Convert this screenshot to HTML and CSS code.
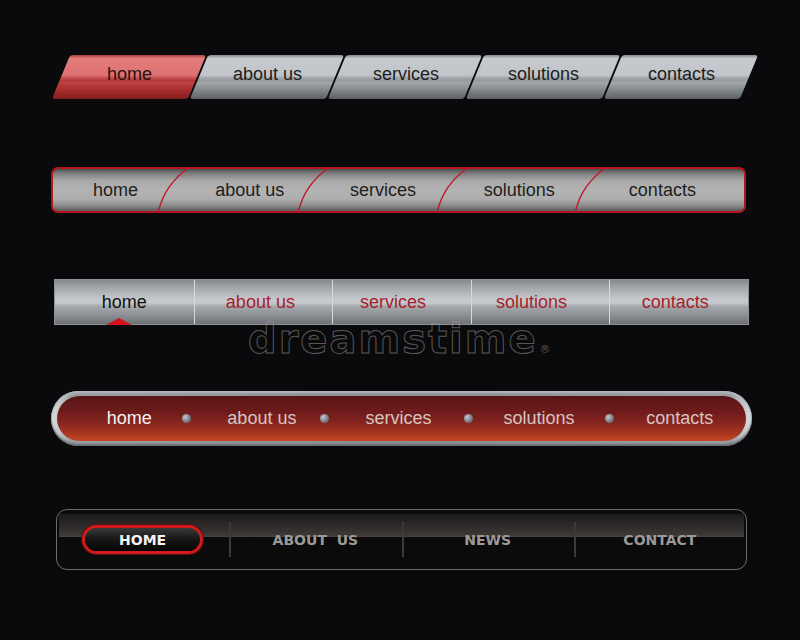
FILE: index.html
```html
<!DOCTYPE html>
<html>
<head>
	<meta charset="utf-8">
	<title>Navigation bars</title>
	<link rel="stylesheet" href="styles.css">
</head>
<body>
	<div class="page">

		<nav class="nav-slant">
			<a class="tab tab-active" href="#"><span>home</span></a>
			<a class="tab" href="#"><span>about us</span></a>
			<a class="tab" href="#"><span>services</span></a>
			<a class="tab" href="#"><span>solutions</span></a>
			<a class="tab" href="#"><span>contacts</span></a>
		</nav>

		<nav class="nav-curve">
			<svg class="curve-lines" width="695" height="46" viewBox="0 0 695 46">
				<path d="M107 46 C111 28 121 12 139 0" />
				<path d="M247 46 C251 28 261 12 279 0" />
				<path d="M386 46 C390 28 400 12 418 0" />
				<path d="M524 46 C528 28 538 12 556 0" />
			</svg>
			<a class="curve-item" href="#">home</a>
			<a class="curve-item" href="#">about us</a>
			<a class="curve-item" href="#">services</a>
			<a class="curve-item" href="#">solutions</a>
			<a class="curve-item" href="#">contacts</a>
		</nav>

		<div class="steel-wrap">
			<nav class="nav-steel">
				<a class="steel-item steel-active" href="#">home</a>
				<a class="steel-item" href="#">about us</a>
				<a class="steel-item" href="#">services</a>
				<a class="steel-item" href="#">solutions</a>
				<a class="steel-item" href="#">contacts</a>
			</nav>
			<div class="watermark">dreamstime<span class="reg">®</span></div>
		</div>

		<nav class="nav-pill">
			<div class="pill-inner">
				<a class="pill-item pill-active" href="#">home</a>
				<a class="pill-item" href="#">about us</a>
				<a class="pill-item" href="#">services</a>
				<a class="pill-item" href="#">solutions</a>
				<a class="pill-item pill-last" href="#">contacts</a>
			</div>
		</nav>

		<nav class="nav-dark">
			<div class="dark-cell"><a class="dark-button" href="#">HOME</a></div>
			<div class="dark-cell dark-sep"><a href="#">ABOUT&nbsp; US</a></div>
			<div class="dark-cell dark-sep"><a href="#">NEWS</a></div>
			<div class="dark-cell dark-sep"><a href="#">CONTACT</a></div>
		</nav>

	</div>
</body>
</html>
```

FILE: styles.css
```css
html, body {
	margin: 0;
	padding: 0;
	background: #0a0a0c;
}
a {
	text-decoration: none;
}
.page {
	width: 800px;
	height: 640px;
	padding-top: 55px;
	box-sizing: border-box;
	font-family: "Liberation Sans", Arial, sans-serif;
	font-size: 18px;
	overflow: hidden;
}

/* 1 - slanted tabs */
.nav-slant {
	display: flex;
	gap: 2px;
	margin-left: 61px;
	height: 44px;
}
.tab {
	width: 136px;
	height: 44px;
	transform: skewX(-22.5deg);
	border-radius: 3px;
	display: flex;
	align-items: center;
	justify-content: center;
	padding-bottom: 6px;
	box-sizing: border-box;
	color: #1c1c1c;
	background: linear-gradient(#868a8f 0, #c6cacf 8%, #c1c5ca 46%, #a4a8ad 52%, #959a9f 58%, #a2a6ab 63%, #7e8388 82%, #5c6065 100%);
}
.tab span {
	transform: skewX(22.5deg);
}
.tab-active {
	color: #2a1010;
	background: linear-gradient(#a84040 0, #e47c7c 8%, #de7272 46%, #c45050 52%, #b43a3a 58%, #be4444 63%, #a42a2a 82%, #841c1c 100%);
}

/* 2 - rounded bar with curved dividers */
.nav-curve {
	position: relative;
	display: grid;
	grid-template-columns: repeat(5, 1fr);
	margin: 68px 0 0 51px;
	width: 695px;
	height: 46px;
	box-sizing: border-box;
	border: 2px solid #b3141f;
	border-radius: 7px;
	background: linear-gradient(#4e4e4e 0, #7c7c7c 10%, #a9a9a9 28%, #b3b3b3 50%, #adadad 72%, #8a8a8a 88%, #5a5a5a 100%);
}
.curve-lines {
	position: absolute;
	left: -2px;
	top: -2px;
}
.curve-lines path {
	fill: none;
	stroke: #c0172a;
	stroke-width: 1.4;
}
.curve-item {
	display: flex;
	align-items: center;
	justify-content: center;
	padding-right: 13px;
	color: #1e1e1e;
}
.curve-item:nth-child(3) { padding-right: 21px; }
.curve-item:nth-child(4) { padding-right: 31px; }
.curve-item:nth-child(5) { padding-right: 35px; }
.curve-item:nth-child(6) { padding-right: 25px; }

/* 3 - steel bar */
.steel-wrap {
	position: relative;
	margin: 66px 0 0 54px;
	width: 695px;
}
.nav-steel {
	display: grid;
	grid-template-columns: repeat(5, 1fr);
	height: 46px;
	box-sizing: border-box;
	border: 1px solid #8e9195;
	background: linear-gradient(#85888c 0, #a3a6aa 18%, #c3c6ca 42%, #c6c9cd 52%, #a4a7ab 60%, #8f9296 78%, #6d7074 100%);
}
.steel-item {
	position: relative;
	display: flex;
	align-items: center;
	justify-content: center;
	color: #a51f2b;
	border-left: 1px solid #d6d8db;
}
.steel-item:first-child {
	border-left: none;
}
.steel-item:nth-child(2) { padding-right: 6px; }
.steel-item:nth-child(3) { padding-right: 18px; }
.steel-item:nth-child(4) { padding-right: 18px; }
.steel-item:nth-child(5) { padding-right: 8px; }
.steel-active {
	color: #111;
}
.steel-active::after {
	content: "";
	position: absolute;
	left: 51px;
	bottom: -1px;
	border-left: 13px solid transparent;
	border-right: 13px solid transparent;
	border-bottom: 7px solid #d3121e;
}
.watermark {
	position: absolute;
	left: 194px;
	top: 47px;
	line-height: 26px;
	font-family: "DejaVu Sans", sans-serif;
	font-weight: bold;
	font-size: 40px;
	letter-spacing: 2px;
	color: transparent;
	-webkit-text-stroke: 1px rgba(165, 165, 165, 0.5);
	pointer-events: none;
}
.watermark .reg {
	font-size: 11px;
	font-weight: normal;
	letter-spacing: 0;
	-webkit-text-stroke: 0;
	color: rgba(150, 150, 150, 0.55);
	margin-left: 2px;
}

/* 4 - red pill */
.nav-pill {
	margin: 66px 0 0 51px;
	width: 701px;
	height: 55px;
	box-sizing: border-box;
	padding: 5px 6px;
	border-radius: 28px;
	background: linear-gradient(90deg, #e0e2e4 0, #9a9ea2 3%, #8a8e92 50%, #9a9ea2 97%, #e0e2e4 100%);
	box-shadow: inset 0 -2px 2px #6a6e72, inset 0 2px 2px #b4b8bc;
}
.pill-inner {
	display: flex;
	height: 100%;
	padding-left: 6px;
	border-radius: 23px;
	background: linear-gradient(#5a1515 0, #6e1b1b 35%, #8c2820 65%, #b53c20 90%, #c44a24 100%);
}
.pill-item {
	position: relative;
	width: 137px;
	display: flex;
	align-items: center;
	justify-content: center;
	color: #d6c4c2;
}
.pill-item:nth-child(2) { padding-right: 4px; }
.pill-item:nth-child(3) { padding-right: 8px; }
.pill-item:nth-child(4) { padding-right: 8px; }
.pill-active {
	color: #f6f0f0;
}
.pill-item::after {
	content: "";
	position: absolute;
	right: 5px;
	top: 18px;
	width: 9px;
	height: 9px;
	border-radius: 50%;
	background: radial-gradient(circle at 35% 35%, #c4c8cc 0, #7c8084 55%, #4e5256 100%);
}
.pill-item:nth-child(2)::after { right: 3px; }
.pill-item:nth-child(3)::after { right: 0; }
.pill-item:nth-child(4)::after { right: -1px; }
.pill-last::after {
	display: none;
}

/* 5 - dark glass bar */
.nav-dark {
	display: grid;
	grid-template-columns: repeat(4, 1fr);
	margin: 63px 0 0 56px;
	width: 691px;
	height: 61px;
	box-sizing: border-box;
	border: 1px solid #6c6c6c;
	border-radius: 11px;
	background:
		linear-gradient(#1c1a1a 0, #262322 30%, #3c3836 90%, #4a4543 100%) 2px 4px / 685px 23px no-repeat,
		#0b0b0c;
	font-family: "DejaVu Sans", Verdana, sans-serif;
	font-weight: bold;
	font-size: 14px;
}
.dark-cell {
	position: relative;
	display: flex;
	align-items: center;
	justify-content: center;
}
.dark-cell a {
	color: #9c9a98;
}
.dark-sep::before {
	content: "";
	position: absolute;
	left: 0;
	top: 12px;
	width: 2px;
	height: 35px;
	background: linear-gradient(90deg, #2a2a2a, #4c4c4c, #2a2a2a);
}
.dark-cell .dark-button {
	display: flex;
	align-items: center;
	justify-content: center;
	width: 121px;
	height: 29px;
	margin-left: -1px;
	box-sizing: border-box;
	border: 3px solid #d01a1e;
	border-radius: 15px;
	background: linear-gradient(#3a3a3a 0, #161616 50%, #050505 100%);
	box-shadow: 0 0 0 1px #5a0c0e;
	color: #f4f4f4;
}
```
